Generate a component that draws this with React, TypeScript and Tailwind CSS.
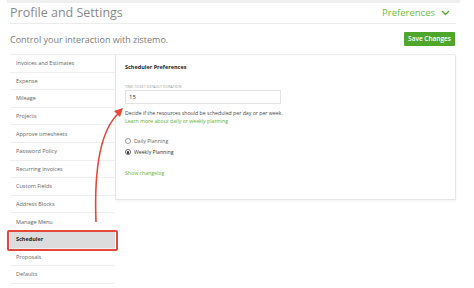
import React from 'react';

const menu = [
  'Invoices and Estimates',
  'Expense',
  'Mileage',
  'Projects',
  'Approve timesheets',
  'Password Policy',
  'Recurring invoices',
  'Custom Fields',
  'Address Blocks',
  'Manage Menu',
  'Scheduler',
  'Proposals',
  'Defaults',
];

export default function App() {
  return (
    <div className="w-[474px] h-[288px] bg-white overflow-hidden relative" style={{ fontFamily: '"Open Sans", sans-serif' }}>
      <div className="h-[3px] mx-[7px] w-[453px] bg-[#efefef]" />

      {/* header */}
      <div className="ml-[10px] w-[446px] h-[21px] flex items-center justify-between border-b border-[#ececec]">
        <h1 className="text-[12.5px] text-[#8a8a8a] leading-none">Profile and Settings</h1>
        <div className="flex items-center gap-[6px] pr-[6px] text-[#6cbf45]">
          <span className="text-[9.5px] leading-none">Preferences</span>
          <svg width="9" height="6" viewBox="0 0 9 6" fill="none">
            <path d="M1 1l3.5 3.5L8 1" stroke="#5aa832" strokeWidth="1.4" />
          </svg>
        </div>
      </div>

      <div className="ml-[10px] w-[445px] h-[31px] flex items-center justify-between border-b border-[#ececec]">
        <p className="text-[9px] text-[#7d7d7d] leading-none">Control your interaction with zistemo.</p>
        <button className="h-[14px] px-[4px] bg-[#4ea62a] text-white text-[6.5px] font-semibold leading-none rounded-[1px]">
          Save Changes
        </button>
      </div>

      <div className="flex ml-[10px]">
        {/* sidebar */}
        <ul className="w-[105px]">
          {menu.map((m) => (
            <li
              key={m}
              className={`h-[17.6px] flex items-center pl-[6px] text-[5.5px] border-b border-[#efefef] ${
                m === 'Scheduler' ? 'bg-[#dcdcdc] font-bold text-[#222]' : 'text-[#666]'
              }`}
            >
              {m}
            </li>
          ))}
        </ul>

        {/* panel */}
        <div className="w-[341px] h-[145px] border-l border-r border-b border-[#e6e6e6] shadow-[0_2px_3px_rgba(0,0,0,0.04)] pl-[9px] pt-[10px]">
          <h2 className="text-[5.5px] font-bold text-[#222] leading-none">Scheduler Preferences</h2>
          <div className="mt-[14px] text-[3.5px] uppercase tracking-[0.02em] text-[#999] leading-none">Time ticket default duration</div>
          <div className="mt-[2px] w-[156px] h-[14px] border border-[#e3e3e3] flex items-center pl-[3px] text-[6px] text-[#333]">15</div>
          <p className="mt-[7px] text-[5.2px] text-[#444] leading-none">Decide if the resources should be scheduled per day or per week.</p>
          <p className="mt-[3px] text-[5.2px] text-[#5fb236] leading-none">Learn more about daily or weekly planning</p>
          <div className="mt-[14px] flex items-center gap-[3px] text-[5.2px] text-[#666] leading-none">
            <span className="w-[6px] h-[6px] rounded-full border border-[#999]" />
            Daily Planning
          </div>
          <div className="mt-[5px] flex items-center gap-[3px] text-[5.2px] text-[#333] leading-none">
            <span className="w-[6px] h-[6px] rounded-full border border-[#666] flex items-center justify-center">
              <span className="w-[2.5px] h-[2.5px] rounded-full bg-[#333]" />
            </span>
            Weekly Planning
          </div>
          <p className="mt-[16px] text-[5.2px] text-[#5fb236] leading-none">Show changelog</p>
        </div>
      </div>

      {/* annotation overlay */}
      <div className="absolute left-[7px] top-[230px] w-[111px] h-[21px] border-2 border-[#e5473b] rounded-[2px]" />
      <svg className="absolute left-0 top-0" width="474" height="288" viewBox="0 0 474 288">
        <path d="M96 222 C 94 170, 100 130, 119 113" stroke="#e5473b" strokeWidth="1.6" fill="none" />
        <path d="M123 108 L 114 111 L 120 117 Z" fill="#e5473b" />
      </svg>
    </div>
  );
}
